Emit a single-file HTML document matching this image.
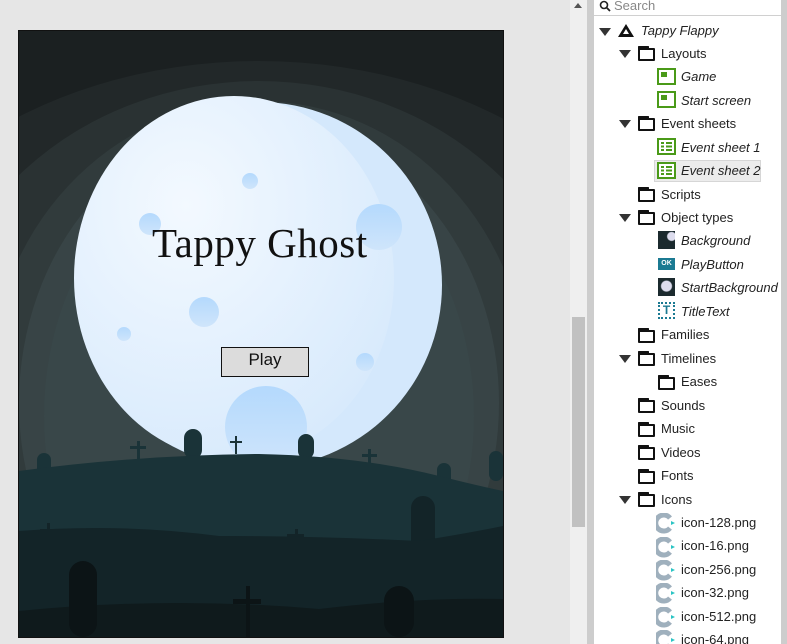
<!DOCTYPE html>
<html><head><meta charset="utf-8"><style>
*{margin:0;padding:0;box-sizing:border-box}
html,body{width:787px;height:644px;overflow:hidden}
body{background:#e6e6e6;position:relative;font-family:"Liberation Sans","DejaVu Sans",sans-serif}
#wrap{position:absolute;left:0;top:0;width:787px;height:644px;overflow:hidden}
#game{position:absolute;left:18px;top:30px;width:486px;height:608px;border:1px solid #111}
#track{position:absolute;left:570px;top:0;width:17px;height:644px;background:#efefef}
#thumb{position:absolute;left:572px;top:317px;width:13px;height:210px;background:#c1c1c1}
#strip{position:absolute;left:587px;top:0;width:7px;height:644px;background:#cdcdcd}
#panel{position:absolute;left:594px;top:0;width:187px;height:644px;background:#fff}
#rb{position:absolute;left:781px;top:0;width:6px;height:644px;background:#cdcdcd}
#search{position:absolute;left:594px;top:0;width:187px;height:16px;border-bottom:1px solid #d0d0d0;font-size:13px;color:#888;padding-left:20px;line-height:11px}
.row{position:absolute;height:22px;font-size:13px;color:#222;line-height:22px;white-space:nowrap}
.it{font-style:italic}
.arr{position:absolute;width:0;height:0;border-left:6px solid transparent;border-right:6px solid transparent;border-top:8px solid #333}
.fold{position:absolute;width:17px;height:13px;border:2px solid #111;border-radius:1px}
.fold:before{content:"";position:absolute;left:-2px;top:-4px;width:7px;height:2px;border:2px solid #111;border-bottom:none;border-radius:1px 1px 0 0}
</style></head><body><div id="wrap">
<div id="game">
<svg width="484" height="606" viewBox="0 0 484 606">
<defs>
<radialGradient id="mg" cx="0.35" cy="0.3" r="0.8"><stop offset="0" stop-color="#f3f9ff"/><stop offset="1" stop-color="#d6e9fc"/></radialGradient>
<linearGradient id="cr" x1="0" y1="0" x2="0" y2="1"><stop offset="0" stop-color="#b4d9fd"/><stop offset="1" stop-color="#cfe5fb"/></linearGradient>
</defs>
<rect width="484" height="606" fill="#1b2021"/>
<ellipse cx="240" cy="340" rx="420" ry="310" fill="#222829"/>
<ellipse cx="240" cy="350" rx="330" ry="300" fill="#2a3233"/>
<ellipse cx="240" cy="360" rx="270" ry="290" fill="#313b3c"/>
<ellipse cx="240" cy="372" rx="240" ry="280" fill="#384446"/>
<ellipse cx="240" cy="385" rx="215" ry="270" fill="#394749"/>
<circle cx="240" cy="254" r="183" fill="#d4e8fc"/>
<ellipse cx="215" cy="247" rx="160" ry="182" fill="url(#mg)"/>
<circle cx="231" cy="150" r="8" fill="url(#cr)"/>
<circle cx="131" cy="193" r="11" fill="url(#cr)"/>
<circle cx="360" cy="196" r="23" fill="url(#cr)"/>
<circle cx="185" cy="281" r="15" fill="url(#cr)"/>
<circle cx="105" cy="303" r="7" fill="url(#cr)"/>
<circle cx="346" cy="331" r="9" fill="url(#cr)"/>
<circle cx="247" cy="396" r="41" fill="url(#cr)"/>
<g fill="#1a3338"><rect x="165" y="398" width="18" height="30" rx="9"/><rect x="279" y="403" width="16" height="25" rx="8"/><rect x="118" y="410" width="3" height="22"/><rect x="111" y="415" width="16" height="3"/><rect x="216" y="405" width="2" height="18"/><rect x="211" y="410" width="12" height="2"/><rect x="349" y="418" width="3" height="22"/><rect x="343" y="423" width="15" height="3"/><rect x="18" y="422" width="14" height="24" rx="7"/><rect x="418" y="432" width="14" height="24" rx="7"/><rect x="470" y="420" width="14" height="30" rx="7"/></g>
<path d="M0 440 Q120 424 240 423 Q340 425 420 445 Q460 455 484 460 L484 606 L0 606Z" fill="#1a3338"/>
<g fill="#132428"><rect x="392" y="465" width="24" height="60" rx="12"/><rect x="147" y="503" width="18" height="40" rx="9"/><rect x="28" y="492" width="3" height="28"/><rect x="21" y="498" width="18" height="4"/><rect x="276" y="498" width="3" height="24"/><rect x="268" y="503" width="17" height="3"/></g>
<path d="M0 500 Q100 492 200 505 Q300 505 400 510 Q450 502 484 495 L484 606 L0 606Z" fill="#132428"/>
<path d="M0 580 Q150 565 300 578 Q400 566 484 568 L484 606 L0 606Z" fill="#0f1a1c"/>
<g fill="#0c1416"><rect x="50" y="530" width="28" height="76" rx="14"/><rect x="365" y="555" width="30" height="51" rx="15"/><rect x="227" y="555" width="4" height="51"/><rect x="214" y="568" width="28" height="5"/></g>
<text x="133" y="226" font-family="'Liberation Serif',serif" font-size="41" fill="#111" letter-spacing="0.5">Tappy Ghost</text>
<rect x="202.5" y="316.5" width="87" height="29" fill="#dcdcdc" stroke="#111"/>
<text x="246" y="334" font-family="'Liberation Sans',sans-serif" font-size="17" fill="#111" text-anchor="middle">Play</text>
</svg>
</div>
<div id="track"></div><div id="thumb"></div>
<div style="position:absolute;left:574px;top:3px;width:0;height:0;border-left:4px solid transparent;border-right:4px solid transparent;border-bottom:5px solid #555"></div>
<div id="strip"></div>
<div id="panel"></div><div id="rb"></div>
<div id="search"><svg style="position:absolute;left:5px;top:0" width="12" height="12"><circle cx="5" cy="5" r="3.5" fill="none" stroke="#222" stroke-width="1.6"/><path d="M7.5 7.5L11 11" stroke="#222" stroke-width="1.8"/></svg>Search</div>

<div class="arr" style="left:599px;top:28px"></div>
<svg style="position:absolute;left:617px;top:23px" width="18" height="15"><path d="M9 1L17 14H1Z" fill="#111"/><path d="M9 6L12 11H6Z" fill="#fff"/></svg>
<div class="row it" style="left:641px;top:20px">Tappy Flappy</div>

<div class="arr" style="left:619px;top:50px"></div><div class="fold" style="left:638px;top:48px"></div><div class="row" style="left:661px;top:43px">Layouts</div>
<svg style="position:absolute;left:657px;top:68px" width="19" height="17"><rect x="1" y="1" width="17" height="15" fill="#fff" stroke="#4a9a18" stroke-width="2"/><rect x="4" y="4" width="6" height="5" fill="#4a9a18"/></svg><div class="row it" style="left:681px;top:66px">Game</div>
<svg style="position:absolute;left:657px;top:91px" width="19" height="17"><rect x="1" y="1" width="17" height="15" fill="#fff" stroke="#4a9a18" stroke-width="2"/><rect x="4" y="4" width="6" height="5" fill="#4a9a18"/></svg><div class="row it" style="left:681px;top:90px">Start screen</div>
<div class="arr" style="left:619px;top:120px"></div><div class="fold" style="left:638px;top:118px"></div><div class="row" style="left:661px;top:113px">Event sheets</div>
<svg style="position:absolute;left:657px;top:138px" width="19" height="17"><rect x="1" y="1" width="17" height="15" fill="#fff" stroke="#4a9a18" stroke-width="2"/><path d="M4 5h3M9 5h6M4 8.5h3M9 8.5h6M4 12h3M9 12h6" stroke="#4a9a18" stroke-width="2"/></svg><div class="row it" style="left:681px;top:137px">Event sheet 1</div>
<div style="position:absolute;left:654px;top:160px;width:107px;height:22px;background:#ececec;border:1px solid #d6d6d6"></div>
<svg style="position:absolute;left:657px;top:162px" width="19" height="17"><rect x="1" y="1" width="17" height="15" fill="#fff" stroke="#4a9a18" stroke-width="2"/><path d="M4 5h3M9 5h6M4 8.5h3M9 8.5h6M4 12h3M9 12h6" stroke="#4a9a18" stroke-width="2"/></svg><div class="row it" style="left:681px;top:160px">Event sheet 2</div>
<div class="fold" style="left:638px;top:189px"></div><div class="row" style="left:661px;top:184px">Scripts</div>
<div class="arr" style="left:619px;top:214px"></div><div class="fold" style="left:638px;top:212px"></div><div class="row" style="left:661px;top:207px">Object types</div>
<div style="position:absolute;left:658px;top:231px;width:17px;height:18px;background:radial-gradient(circle at 80% 30%,#dde 0 4px,#1b2a2e 5px)"></div><div class="row it" style="left:681px;top:230px">Background</div>
<div style="position:absolute;left:658px;top:258px;width:17px;height:12px;background:#1b7a92;color:#fff;font-size:7px;font-weight:bold;line-height:12px;text-align:center">OK</div><div class="row it" style="left:681px;top:254px">PlayButton</div>
<div style="position:absolute;left:658px;top:278px;width:17px;height:18px;background:radial-gradient(circle at 50% 45%,#dde 0 5px,#1b2a2e 6px)"></div><div class="row it" style="left:681px;top:277px">StartBackground</div>
<div style="position:absolute;left:658px;top:302px;width:17px;height:17px;border:2px dotted #1b7a92;color:#1b7a92;font-size:12px;font-weight:bold;line-height:13px;text-align:center">T</div><div class="row it" style="left:681px;top:301px">TitleText</div>
<div class="fold" style="left:638px;top:330px"></div><div class="row" style="left:661px;top:324px">Families</div>
<div class="arr" style="left:619px;top:355px"></div><div class="fold" style="left:638px;top:353px"></div><div class="row" style="left:661px;top:348px">Timelines</div>
<div class="fold" style="left:658px;top:377px"></div><div class="row" style="left:681px;top:371px">Eases</div>
<div class="fold" style="left:638px;top:400px"></div><div class="row" style="left:661px;top:395px">Sounds</div>
<div class="fold" style="left:638px;top:424px"></div><div class="row" style="left:661px;top:418px">Music</div>
<div class="fold" style="left:638px;top:447px"></div><div class="row" style="left:661px;top:442px">Videos</div>
<div class="fold" style="left:638px;top:471px"></div><div class="row" style="left:661px;top:465px">Fonts</div>
<div class="arr" style="left:619px;top:496px"></div><div class="fold" style="left:638px;top:494px"></div><div class="row" style="left:661px;top:489px">Icons</div>
<svg width="0" height="0" style="position:absolute"><defs><g id="ci"><path d="M14 5A8 8 0 1 0 14 15" fill="none" stroke="#9fb0bd" stroke-width="5"/><path d="M15 8l4 2-4 2z" fill="#2bc4c4"/></g></defs></svg>
<svg style="position:absolute;left:656px;top:513px" width="22" height="21"><use href="#ci"/></svg><div class="row" style="left:681px;top:512px">icon-128.png</div>
<svg style="position:absolute;left:656px;top:537px" width="22" height="21"><use href="#ci"/></svg><div class="row" style="left:681px;top:535px">icon-16.png</div>
<svg style="position:absolute;left:656px;top:560px" width="22" height="21"><use href="#ci"/></svg><div class="row" style="left:681px;top:559px">icon-256.png</div>
<svg style="position:absolute;left:656px;top:583px" width="22" height="21"><use href="#ci"/></svg><div class="row" style="left:681px;top:582px">icon-32.png</div>
<svg style="position:absolute;left:656px;top:607px" width="22" height="21"><use href="#ci"/></svg><div class="row" style="left:681px;top:606px">icon-512.png</div>
<svg style="position:absolute;left:656px;top:630px" width="22" height="14"><use href="#ci"/></svg><div class="row" style="left:681px;top:629px;height:15px">icon-64.png</div>
</div></body></html>
